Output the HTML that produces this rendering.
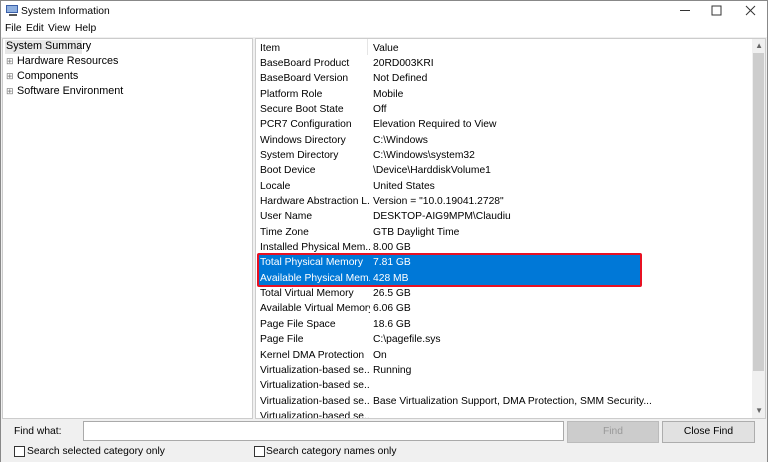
<!DOCTYPE html>
<html><head><style>
*{margin:0;padding:0;box-sizing:border-box}
body{width:768px;height:462px;overflow:hidden;background:#f0f0f0;font-family:"Liberation Sans",sans-serif;font-size:10.3px;color:#000;position:relative}
.abs{position:absolute}
.t{position:absolute;white-space:nowrap;line-height:15px}
.c1{width:110px;overflow:hidden}
</style></head><body>
<div class="abs" style="left:0;top:0;width:768px;height:37px;background:#fff"></div>
<div class="abs" style="left:0;top:0;width:1px;height:462px;background:#888"></div>
<div class="abs" style="right:0;top:0;width:1px;height:462px;background:#888"></div>
<div class="abs" style="left:0;top:0;width:768px;height:1px;background:#888"></div>
<svg class="abs" style="left:6px;top:5px" width="13" height="12"><rect x="0" y="0" width="12" height="8" fill="#3a5fa8"/><rect x="1" y="1" width="10" height="6" fill="#8fb0e0"/><rect x="3" y="9" width="8" height="2" fill="#555"/></svg>
<div class="t" style="left:21px;top:4px">System Information</div>
<div class="t" style="left:710px;top:4px;font-size:0"><svg width="50" height="14"><rect x="2" y="2" width="9" height="9" fill="none" stroke="#333"/><path d="M36 2l9 9M45 2l-9 9" stroke="#333"/></svg></div>
<div class="abs" style="left:680px;top:10px;width:10px;height:1px;background:#333"></div>
<div class="t" style="left:5px;top:21px">File</div><div class="t" style="left:26px;top:21px">Edit</div><div class="t" style="left:48px;top:21px">View</div><div class="t" style="left:75px;top:21px">Help</div>
<div class="abs" style="left:2px;top:38px;width:251px;height:381px;background:#fff;border:1px solid #ccc"></div>
<div class="abs" style="left:5px;top:40px;width:77px;height:14px;background:#e8e8e8"></div>
<div class="t" style="left:6px;top:39px;font-size:10.8px">System Summary</div>
<div class="t" style="left:6px;top:54px;color:#777;font-size:9px">⊞</div><div class="t" style="left:17px;top:54px;font-size:10.8px">Hardware Resources</div>
<div class="t" style="left:6px;top:69px;color:#777;font-size:9px">⊞</div><div class="t" style="left:17px;top:69px;font-size:10.8px">Components</div>
<div class="t" style="left:6px;top:84px;color:#777;font-size:9px">⊞</div><div class="t" style="left:17px;top:84px;font-size:10.8px">Software Environment</div>
<div class="abs" style="left:255px;top:38px;width:511px;height:381px;background:#fff;border:1px solid #ccc;overflow:hidden">
<div class="abs" style="left:111px;top:0;width:1px;height:16px;background:#e5e5e5"></div>
<div class="abs" style="left:1px;top:214px;width:385px;height:34px;background:#0078d7;border:2px solid #e81123;border-radius:2px"></div>
<div id="rows"></div>
<div class="abs" style="right:0;top:0;width:13px;height:381px;background:#f0f0f0"></div>
<div class="abs" style="right:1px;top:14px;width:11px;height:318px;background:#cdcdcd"></div>
<div class="t" style="right:2px;top:-1px;font-size:8px;color:#666">▲</div>
<div class="t" style="right:2px;top:364px;font-size:8px;color:#666">▼</div>
</div>
<div class="t" style="left:14px;top:424px">Find what:</div>
<div class="abs" style="left:83px;top:421px;width:481px;height:20px;background:#fff;border:1px solid #aaa"></div>
<div class="abs" style="left:567px;top:421px;width:92px;height:22px;background:#ccc;border:1px solid #bbb;color:#999;text-align:center;line-height:20px">Find</div>
<div class="abs" style="left:662px;top:421px;width:93px;height:22px;background:#e1e1e1;border:1px solid #adadad;text-align:center;line-height:20px">Close Find</div>
<div class="abs" style="left:14px;top:446px;width:11px;height:11px;background:#fff;border:1px solid #333"></div>
<div class="t" style="left:27px;top:444px">Search selected category only</div>
<div class="abs" style="left:254px;top:446px;width:11px;height:11px;background:#fff;border:1px solid #333"></div>
<div class="t" style="left:266px;top:444px">Search category names only</div>
<script>
var d=[["Item","Value"],["BaseBoard Product","20RD003KRI"],["BaseBoard Version","Not Defined"],["Platform Role","Mobile"],["Secure Boot State","Off"],["PCR7 Configuration","Elevation Required to View"],["Windows Directory","C:\\Windows"],["System Directory","C:\\Windows\\system32"],["Boot Device","\\Device\\HarddiskVolume1"],["Locale","United States"],["Hardware Abstraction L...","Version = \"10.0.19041.2728\""],["User Name","DESKTOP-AIG9MPM\\Claudiu"],["Time Zone","GTB Daylight Time"],["Installed Physical Mem...","8.00 GB"],["Total Physical Memory","7.81 GB"],["Available Physical Mem...","428 MB"],["Total Virtual Memory","26.5 GB"],["Available Virtual Memory","6.06 GB"],["Page File Space","18.6 GB"],["Page File","C:\\pagefile.sys"],["Kernel DMA Protection","On"],["Virtualization-based se...","Running"],["Virtualization-based se...",""],["Virtualization-based se...","Base Virtualization Support, DMA Protection, SMM Security..."],["Virtualization-based se...",""]];
var h="";d.forEach(function(r,i){var y=1.5+i*15.35;var c=(i==14||i==15)?"color:#fff;":"";h+='<div class="t c1" style="'+c+'left:4px;top:'+y+'px">'+r[0]+'</div><div class="t" style="'+c+'left:117px;top:'+y+'px">'+r[1]+'</div>';});
document.getElementById("rows").innerHTML=h;
</script>
</body></html>
